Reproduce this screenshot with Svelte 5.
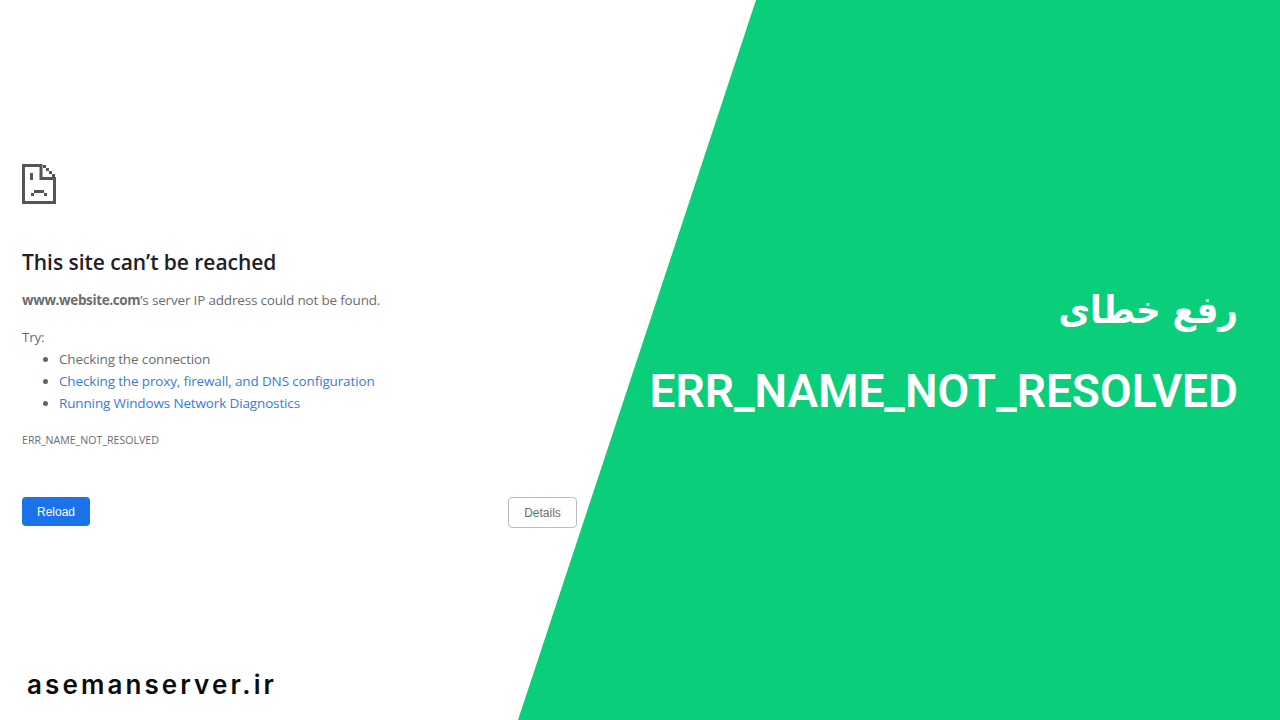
<script>
  const suggestions = [
    { text: 'Checking the connection', link: false },
    { text: 'Checking the proxy, firewall, and DNS configuration', link: true },
    { text: 'Running Windows Network Diagnostics', link: true }
  ];
</script>

<div class="page">
  <div class="shape"></div>

  <main class="error">
    <svg class="sad-page" width="34" height="40" viewBox="0 0 34 40" aria-hidden="true">
      <path d="M1.5 38.5V1.5H19V14.5H32.5V38.5Z" fill="none" stroke="#555" stroke-width="3" />
      <path d="M21 1h3v3h-3zM24 4h3v3h-3zM27 7h3v3h-3zM30 10h3v3h-3z" fill="#555" />
      <path d="M8 9h3v7H8z" fill="#555" />
      <path d="M9 32v-3h3v-3h10v3h3v3h-3v-3H12v3z" fill="#555" />
    </svg>

    <h1>This site can’t be reached</h1>
    <p class="summary"><strong>www.website.com</strong>’s server IP address could not be found.</p>
    <p class="try">Try:</p>
    <ul>
      {#each suggestions as item}
        <li class:link={item.link}>{item.text}</li>
      {/each}
    </ul>
    <p class="code">ERR_NAME_NOT_RESOLVED</p>

    <div class="actions">
      <button class="reload">Reload</button>
      <button class="details">Details</button>
    </div>
  </main>

  <div class="brand">asemanserver.ir</div>

  <section class="headline">
    <div class="fa" dir="rtl">رفع خطای</div>
    <div class="en">ERR_NAME_NOT_RESOLVED</div>
  </section>
</div>

<style>
  :global(body) {
    margin: 0;
    background: #fff;
  }

  .page {
    position: relative;
    width: 1280px;
    height: 720px;
    overflow: hidden;
    background: #fff;
    font-family: "Open Sans", "Noto Sans", sans-serif;
  }

  .shape {
    position: absolute;
    inset: 0;
    background: #0bce7b;
    clip-path: polygon(756px 0, 1280px 0, 1280px 720px, 518px 720px);
  }

  .error {
    position: relative;
    display: flex;
    flex-direction: column;
    align-items: flex-start;
    width: 555px;
    padding: 164px 0 0 22px;
    color: #6a6d70;
  }

  .sad-page {
    display: block;
  }

  h1 {
    margin: 43px 0 0;
    font-size: 21px;
    line-height: 30px;
    font-weight: 600;
    letter-spacing: -0.04px;
    color: #202124;
  }

  .summary {
    margin: 13px 0 0;
    font-size: 13.5px;
    line-height: 20px;
    letter-spacing: -0.18px;
  }

  .summary strong {
    font-weight: 700;
    letter-spacing: -0.36px;
  }

  .try {
    margin: 17px 0 0;
    font-size: 13.5px;
    line-height: 20px;
    letter-spacing: -0.22px;
  }

  ul {
    margin: 1px 0 0;
    padding: 0 0 0 37px;
    font-size: 13.5px;
    line-height: 22.2px;
    letter-spacing: -0.14px;
  }

  .link {
    color: #3a7bd9;
  }

  li::marker {
    color: #5f6368;
  }

  .code {
    margin: 17px 0 0;
    font-size: 10.6px;
    line-height: 16px;
  }

  .actions {
    display: flex;
    justify-content: space-between;
    align-items: flex-start;
    width: 100%;
    margin-top: 49px;
  }

  button {
    font-family: "Liberation Sans", Arial, sans-serif;
    font-size: 12px;
    border-radius: 4px;
  }

  .reload {
    width: 68px;
    height: 29px;
    padding: 1px 0 0;
    background: #1a73e8;
    border: none;
    color: #fff;
  }

  .details {
    width: 69px;
    height: 31px;
    padding: 2px 0 0;
    background: #fff;
    border: 1px solid #bdbdbd;
    color: #6a6d70;
  }

  .brand {
    position: absolute;
    left: 27px;
    top: 668px;
    font-family: Inter, "Liberation Sans", sans-serif;
    font-size: 26px;
    line-height: 34px;
    font-weight: 600;
    letter-spacing: 3.1px;
    color: #0b0b0b;
  }

  .headline {
    position: absolute;
    top: 284px;
    right: 42px;
    display: flex;
    flex-direction: column;
    align-items: flex-end;
    gap: 28px;
    color: #fff;
  }

  .fa {
    font-family: "DejaVu Sans Condensed", "DejaVu Sans", sans-serif;
    font-size: 38px;
    line-height: 52px;
    font-weight: 700;
  }

  .en {
    font-family: Roboto, sans-serif;
    font-size: 46px;
    line-height: 54px;
    font-weight: 600;
  }
</style>
